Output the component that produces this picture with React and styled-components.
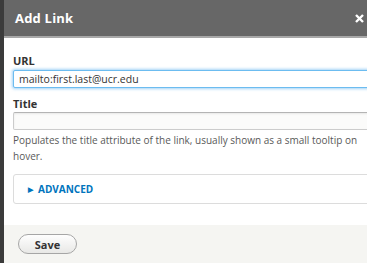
import React from 'react';
import styled, { createGlobalStyle } from 'styled-components';

const Global = createGlobalStyle`
  html, body {
    margin: 0;
    padding: 0;
    background: #3b3b3b;
    overflow: hidden;
  }
  body {
    font-family: "Open Sans", "Lucida Grande", sans-serif;
  }
`;

const Dialog = styled.div`
  margin-left: 4px;
  width: 380px;
  height: 263px;
  background: #fff;
  display: flex;
  flex-direction: column;
`;

const TitleBar = styled.div`
  height: 36px;
  background: #676767;
  border-bottom: 2px solid #a8a8a8;
  display: flex;
  align-items: center;
  justify-content: space-between;
  padding: 0 0 0 11px;
  box-sizing: content-box;
`;

const Heading = styled.h1`
  margin: 0;
  color: #fff;
  font-size: 13px;
  font-weight: bold;
  letter-spacing: 0.2px;
`;

const Close = styled.button`
  border: 0;
  background: none;
  padding: 0;
  margin-right: 20px;
  display: flex;
`;

const Body = styled.div`
  flex: 1;
  padding: 16px 0 0 9px;
`;

const Label = styled.label`
  display: block;
  font-size: 11px;
  line-height: 14px;
  font-weight: bold;
  color: #333;
  margin-bottom: ${p => p.$gap ?? 2}px;
`;

const Input = styled.input`
  box-sizing: border-box;
  display: block;
  width: 400px;
  height: 18px;
  padding: 0 5px;
  font-family: inherit;
  font-size: 10.5px;
  color: #333;
  background: ${p => (p.$focus ? '#fff' : '#fbfbfa')};
  border: 1px solid ${p => (p.$focus ? '#6cbcf0' : '#ccc')};
  border-top-color: ${p => (p.$focus ? '#6cbcf0' : '#b4b4b4')};
  border-radius: 2px;
  box-shadow: ${p => (p.$focus ? '0 0 3px 1px rgba(100, 180, 240, 0.6)' : 'inset 0 1px 2px rgba(0,0,0,0.08)')};
  outline: none;
`;

const Field = styled.div`
  margin-bottom: ${p => p.$gap || 0}px;
`;

const Description = styled.div`
  font-size: 10px;
  color: #595959;
  line-height: 16px;
  margin-top: 2px;
  padding-right: 12px;
`;

const Details = styled.div`
  margin-top: 10px;
  width: 400px;
  height: 30px;
  box-sizing: border-box;
  border: 1px solid #dcdcdc;
  border-radius: 3px;
  display: flex;
  align-items: center;
  padding-left: 14px;
`;

const Summary = styled.span`
  color: #0074bd;
  font-size: 10px;
  font-weight: bold;
  display: flex;
  align-items: center;
  gap: 5px;
`;

const Arrow = styled.span`
  font-size: 7px;
`;

const Footer = styled.div`
  height: 38px;
  background: #f5f5f2;
  display: flex;
  align-items: center;
  padding-left: 14px;
`;

const Button = styled.button`
  width: 59px;
  height: 20px;
  border: 1px solid #a6a6a6;
  border-radius: 10px;
  background: linear-gradient(#fefefe, #e8e8e6);
  font-family: inherit;
  font-size: 11px;
  font-weight: bold;
  color: #333;
  padding: 0;
`;

export default function App() {
  return (
    <>
      <Global />
      <Dialog>
        <TitleBar>
          <Heading>Add Link</Heading>
          <Close aria-label="Close">
            <svg width="9" height="9" viewBox="0 0 9 9">
              <path d="M1 1L8 8M8 1L1 8" stroke="#fff" strokeWidth="2.4" />
            </svg>
          </Close>
        </TitleBar>
        <Body>
          <Field $gap={9}>
            <Label>URL</Label>
            <Input $focus defaultValue="mailto:first.last@ucr.edu" />
          </Field>
          <Field>
            <Label $gap={1}>Title</Label>
            <Input />
            <Description>
              Populates the title attribute of the link, usually shown as a small tooltip on hover.
            </Description>
          </Field>
          <Details>
            <Summary>
              <Arrow>▶</Arrow>ADVANCED
            </Summary>
          </Details>
        </Body>
        <Footer>
          <Button>Save</Button>
        </Footer>
      </Dialog>
    </>
  );
}
